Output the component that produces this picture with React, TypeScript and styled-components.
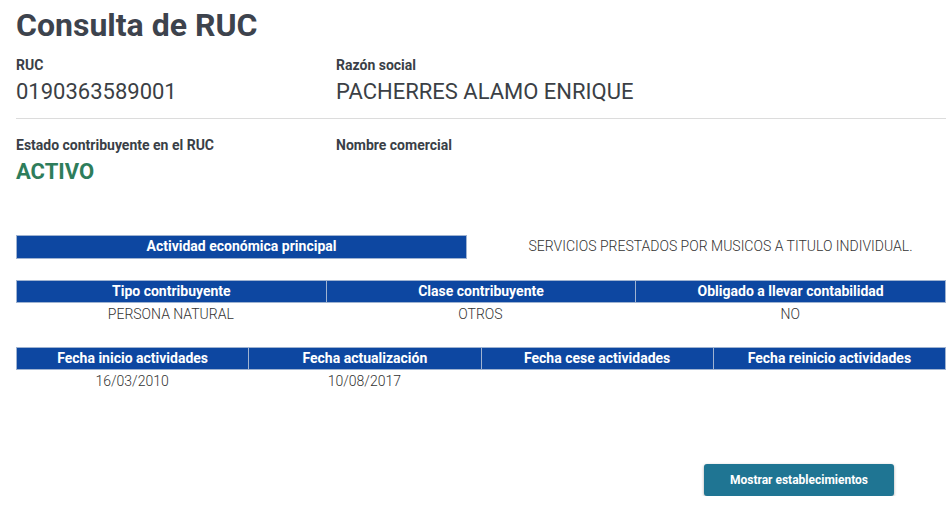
import React from 'react';
import styled, { createGlobalStyle } from 'styled-components';

const GlobalStyle = createGlobalStyle`
	html, body {
		margin: 0;
		padding: 0;
		background: #ffffff;
	}
	body {
		font-family: Roboto, 'Liberation Sans', Arial, sans-serif;
		color: #333;
	}
`;

const BLUE = '#0d47a1';
const CELL_BORDER = '#9fb3d1';

type Field = { label: string; value?: string; status?: boolean };

const topFields: Field[][] = [
	[
		{ label: 'RUC', value: '0190363589001' },
		{ label: 'Razón social', value: 'PACHERRES ALAMO ENRIQUE' },
	],
	[
		{ label: 'Estado contribuyente en el RUC', value: 'ACTIVO', status: true },
		{ label: 'Nombre comercial' },
	],
];

const tipoTable = {
	headers: ['Tipo contribuyente', 'Clase contribuyente', 'Obligado a llevar contabilidad'],
	values: ['PERSONA NATURAL', 'OTROS', 'NO'],
};

const fechaTable = {
	headers: [
		'Fecha inicio actividades',
		'Fecha actualización',
		'Fecha cese actividades',
		'Fecha reinicio actividades',
	],
	values: ['16/03/2010', '10/08/2017', '', ''],
};

const App = () => (
	<>
		<GlobalStyle />
		<Page>
			<Title>Consulta de RUC</Title>
			{topFields.map((row, i) => (
				<InfoRow key={i} $divided={i === 0}>
					{row.map((f) => (
						<InfoCell key={f.label}>
							<Label>{f.label}</Label>
							{f.value && <Value $status={f.status}>{f.value}</Value>}
						</InfoCell>
					))}
				</InfoRow>
			))}

			<ActivityRow>
				<HeadCell>Actividad económica principal</HeadCell>
				<ActivityText>SERVICIOS PRESTADOS POR MUSICOS A TITULO INDIVIDUAL.</ActivityText>
			</ActivityRow>

			<DataTable $cols={tipoTable.headers.length} $gap={22}>
				{tipoTable.headers.map((h) => (
					<HeadCell key={h}>{h}</HeadCell>
				))}
				{tipoTable.values.map((v, i) => (
					<BodyCell key={i}>{v}</BodyCell>
				))}
			</DataTable>

			<DataTable $cols={fechaTable.headers.length} $gap={22}>
				{fechaTable.headers.map((h) => (
					<HeadCell key={h}>{h}</HeadCell>
				))}
				{fechaTable.values.map((v, i) => (
					<BodyCell key={i}>{v}</BodyCell>
				))}
			</DataTable>

			<Actions>
				<PrimaryButton type="button">Mostrar establecimientos</PrimaryButton>
			</Actions>
		</Page>
	</>
);

const Page = styled.div`
	padding: 5px 6px 0 16px;
	width: 952px;
	box-sizing: border-box;
`;

const Title = styled.h1`
	margin: 0 0 11px;
	font-size: 32px;
	line-height: 40px;
	font-weight: 700;
	color: #3d434d;
`;

const InfoRow = styled.div<{ $divided?: boolean }>`
	display: grid;
	grid-template-columns: 320px 1fr;
	padding-bottom: ${(p) => (p.$divided ? '11px' : '0')};
	margin-bottom: ${(p) => (p.$divided ? '17px' : '0')};
	border-bottom: ${(p) => (p.$divided ? '1px solid #dcdcdc' : 'none')};
`;

const InfoCell = styled.div`
	display: flex;
	flex-direction: column;
	gap: 3px;
`;

const Label = styled.div`
	font-size: 14px;
	line-height: 18px;
	font-weight: 700;
	color: #3a3f47;
`;

const Value = styled.div<{ $status?: boolean }>`
	font-size: 22px;
	line-height: 30px;
	font-weight: ${(p) => (p.$status ? 700 : 400)};
	color: ${(p) => (p.$status ? '#2e7d5b' : '#3b3f45')};
`;

const ActivityRow = styled.div`
	display: grid;
	grid-template-columns: 450px 1fr;
	margin-top: 48px;
	width: 929px;
`;

const HeadCell = styled.div`
	background: ${BLUE};
	color: #ffffff;
	font-size: 14px;
	font-weight: 700;
	line-height: 21px;
	text-align: center;
	border: 1px solid ${CELL_BORDER};
	margin: 0 -1px -1px 0;
	white-space: nowrap;
`;

const ActivityText = styled.div`
	font-size: 14px;
	font-weight: 300;
	line-height: 23px;
	text-align: center;
	padding-left: 30px;
	color: #333;
`;

const DataTable = styled.div<{ $cols: number; $gap: number }>`
	display: grid;
	grid-template-columns: repeat(${(p) => p.$cols}, 1fr);
	width: 929px;
	margin-top: ${(p) => p.$gap}px;
`;

const BodyCell = styled.div`
	font-size: 14px;
	font-weight: 300;
	line-height: 22px;
	text-align: center;
	color: #333;
	padding-top: 1px;
`;

const Actions = styled.div`
	display: flex;
	justify-content: flex-end;
	padding-right: 52px;
	margin-top: 72px;
`;

const PrimaryButton = styled.button`
	width: 190px;
	height: 32px;
	background: #1f7593;
	color: #ffffff;
	border: none;
	border-radius: 3px;
	box-shadow: 0 1px 3px rgba(0, 0, 0, 0.35);
	font-family: Roboto, 'Liberation Sans', Arial, sans-serif;
	font-size: 12px;
	font-weight: 700;
	cursor: pointer;
`;

export default App;
